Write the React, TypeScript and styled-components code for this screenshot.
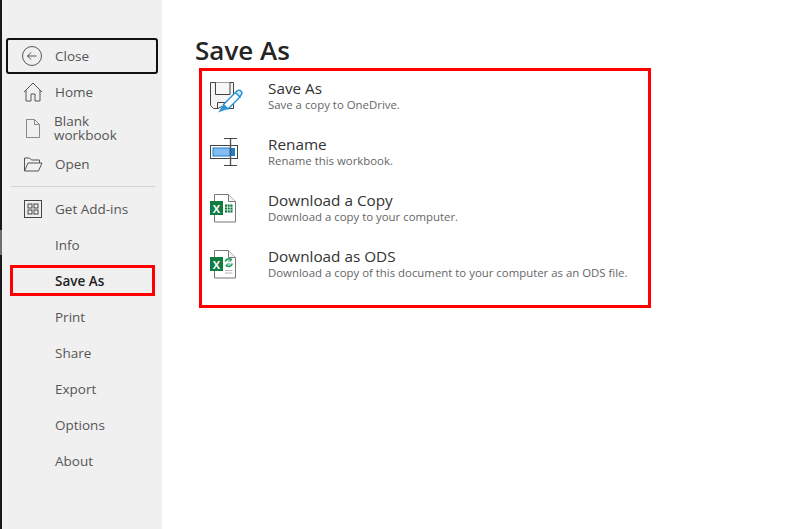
import React from "react";
import styled, { createGlobalStyle } from "styled-components";

const Global = createGlobalStyle`
  html, body { margin: 0; padding: 0; background: #fff; height: 100%; }
  #root { height: 100%; }
  * { box-sizing: border-box; }
`;
const Page = styled.div`
  display: flex; width: 809px; height: 529px; overflow: hidden; background: #fff;
  font-family: "Open Sans", "Noto Sans", "Liberation Sans", sans-serif;
`;
const Edge = styled.div`
  width: 2px; flex: none;
  background: linear-gradient(to bottom, #1a1a1a 0, #1a1a1a 230px, #6e6e6e 230px, #6e6e6e 255px, #1a1a1a 255px);
`;
const Sidebar = styled.nav`
  width: 160px; flex: none; background: #f0f0f0; padding: 38px 0 0 0;
  display: flex; flex-direction: column;
`;
const Item = styled.div<{ $boxed?: boolean }>`
  height: 36px; display: flex; align-items: center; flex: none;
  margin: 0 ${p => (p.$boxed ? "4px" : "0")};
  padding-left: ${p => (p.$boxed ? "47px" : "53px")};
  font-size: 13.5px; color: #555;
  position: relative;
  border: ${p => (p.$boxed ? "2px solid #111" : "none")};
  border-radius: ${p => (p.$boxed ? "3px" : "0")};
`;
const ItemIcon = styled.svg`
  position: absolute; left: 20px; top: 50%; transform: translateY(-50%);
  width: 22px; height: 22px; fill: none; stroke: #555; stroke-width: 1;
`;
const BoxedIcon = styled(ItemIcon)`
  left: 13px;
`;
const TwoLine = styled.span`
  line-height: 14px; margin-left: -1px;
`;
const Divider = styled.hr`
  border: none; border-top: 1px solid #d2d2d2; margin: 4px 5px 4px 9px; height: 0; width: 144px; flex: none;
`;
const MarkedSlot = styled.div`
  height: 36px; flex: none; display: flex; flex-direction: column; justify-content: flex-end;
`;
const Marked = styled.div`
  height: 31px; margin: 0 7px 3px 8px; border: 3px solid #f00; padding-left: 42px;
  display: flex; align-items: center; font-size: 13.5px; font-weight: 600; color: #222;
`;
const Main = styled.main`
  flex: 1; padding: 33px 0 0 33px; background: #fff;
`;
const Title = styled.h1`
  margin: 0; font-size: 26px; line-height: 35px; font-weight: 600; color: #252525; height: 35px;
`;
const Panel = styled.section`
  width: 452px; height: 240px; border: 3px solid #f00; margin: 0 0 0 4px;
  display: flex; flex-direction: column;
`;
const Row = styled.div`
  height: 56px; display: flex; align-items: flex-start; padding: 8px 0 0 6px;
`;
const RowIcon = styled.svg`
  width: 36px; height: 36px; flex: none; margin-right: 24px; margin-top: 1px;
`;
const RowText = styled.div`
  display: flex; flex-direction: column;
`;
const RowTitle = styled.div`
  font-size: 15.3px; line-height: 19px; color: #333;
`;
const RowSub = styled.div`
  font-size: 11.4px; line-height: 14px; color: #666; margin-top: -0.5px;
`;

const ExcelMark = () => (
  <>
    <path d="M6.500 2.500H20.500l7 7v20.500H6.500z" fill="#fff" stroke="#777" />
    <path d="M20.500 2.500V9.500h7" fill="#f4f4f4" stroke="#777" />
    <rect x="2" y="9" width="13" height="14" fill="#107c41" />
    <text x="8.500" y="20.500" fontSize="11" fontWeight="700" fill="#fff" textAnchor="middle" fontFamily="Open Sans, sans-serif">X</text>
  </>
);

export default function App() {
  return (
    <Page>
      <Global />
      <Edge />
      <Sidebar>
        <Item $boxed>
          <BoxedIcon viewBox="0 0 22 22">
            <circle cx="11" cy="11" r="9.500" />
            <path d="M15.500 11h-9M10 7.500L6.500 11l3.500 3.500" />
          </BoxedIcon>
          Close
        </Item>
        <Item>
          <ItemIcon viewBox="0 0 22 22">
            <path d="M2 11L11 2l9 9M4 9v11h5v-7h4v7h5V9" />
          </ItemIcon>
          Home
        </Item>
        <Item>
          <ItemIcon viewBox="0 0 22 22">
            <path d="M4.500 2.500h8l5 5v13h-13zM12.500 2.500v5h5" stroke="#8a8a8a" />
          </ItemIcon>
          <TwoLine>Blank<br />workbook</TwoLine>
        </Item>
        <Item>
          <ItemIcon viewBox="0 0 22 22">
            <path d="M2.500 18V5h5l2 2h8v3M2.500 18h14l3.500-8H6z" />
          </ItemIcon>
          Open
        </Item>
        <Divider />
        <Item>
          <ItemIcon viewBox="0 0 22 22" style={{ stroke: "#444" }}>
            <rect x="2.500" y="2.500" width="17" height="17" />
            <rect x="6" y="6" width="4" height="4" />
            <rect x="12" y="6" width="4" height="4" />
            <rect x="6" y="12" width="4" height="4" />
            <rect x="12" y="12" width="4" height="4" />
          </ItemIcon>
          Get Add-ins
        </Item>
        <Item>Info</Item>
        <MarkedSlot>
          <Marked>Save As</Marked>
        </MarkedSlot>
        <Item>Print</Item>
        <Item>Share</Item>
        <Item>Export</Item>
        <Item>Options</Item>
        <Item>About</Item>
      </Sidebar>
      <Main>
        <Title>Save As</Title>
        <Panel>
          <Row>
            <RowIcon viewBox="0 0 36 36">
              <path d="M2.500 2.500H25.500V16L16 25.500 10 28.500H5.500l-3-3z" fill="#f5f5f5" stroke="#444" />
              <path d="M7.500 2.500V14.500H22V2.500" fill="#f7f7f7" stroke="#444" />
              <path d="M9.500 28.500V22.500H17" fill="none" stroke="#444" />
              <path d="M20 28.500h5.500V24" fill="none" stroke="#444" />
              <path d="M15.500 24.500L27.500 12.500l4.500 4.500L20 29z" fill="#fff" stroke="#1e8fd6" strokeWidth="1.300" />
              <path d="M27.500 12.500l1.500-1.500a2.300 2.300 0 0 1 4 4l-1 2z" fill="#cfe7f8" stroke="#1e8fd6" strokeWidth="1.300" />
              <path d="M15.500 24.500L20 29l-10 3.500z" fill="#2f96dc" />
            </RowIcon>
            <RowText>
              <RowTitle>Save As</RowTitle>
              <RowSub>Save a copy to OneDrive.</RowSub>
            </RowText>
          </Row>
          <Row>
            <RowIcon viewBox="0 0 36 36">
              <rect x="2.500" y="9.500" width="27" height="13" fill="#fff" stroke="#444" />
              <rect x="5" y="12" width="17" height="8" fill="#83bdf2" stroke="#1e7fd0" />
              <rect x="22" y="12" width="5" height="8" fill="#1e7fd0" />
              <path d="M22.500 2.500v27" stroke="#555" strokeWidth="1.400" />
              <path d="M16 2.500h13M16 29.500h13" stroke="#444" />
            </RowIcon>
            <RowText>
              <RowTitle>Rename</RowTitle>
              <RowSub>Rename this workbook.</RowSub>
            </RowText>
          </Row>
          <Row>
            <RowIcon viewBox="0 0 36 36">
              <ExcelMark />
              <path d="M17 12.500h7.500v8H17z" fill="#107c41" />
              <path d="M19.500 12.500v8M22 12.500v8M17 15.200h7.500M17 17.900h7.500" stroke="#fff" strokeWidth="0.700" />
            </RowIcon>
            <RowText>
              <RowTitle>Download a Copy</RowTitle>
              <RowSub>Download a copy to your computer.</RowSub>
            </RowText>
          </Row>
          <Row>
            <RowIcon viewBox="0 0 36 36">
              <ExcelMark />
              <path d="M17.300 13.500a3.600 3.600 0 0 1 6.400-1.200M24.200 15.500a3.600 3.600 0 0 1-6.400 1.500" fill="none" stroke="#21a366" strokeWidth="1.800" />
              <path d="M23 10v3h-3M19 19v-3h3" fill="none" stroke="#21a366" strokeWidth="1" />
              <path d="M17 22.500h7.500M17 25h7.500" stroke="#bbb" />
            </RowIcon>
            <RowText>
              <RowTitle>Download as ODS</RowTitle>
              <RowSub>Download a copy of this document to your computer as an ODS file.</RowSub>
            </RowText>
          </Row>
        </Panel>
      </Main>
    </Page>
  );
}
